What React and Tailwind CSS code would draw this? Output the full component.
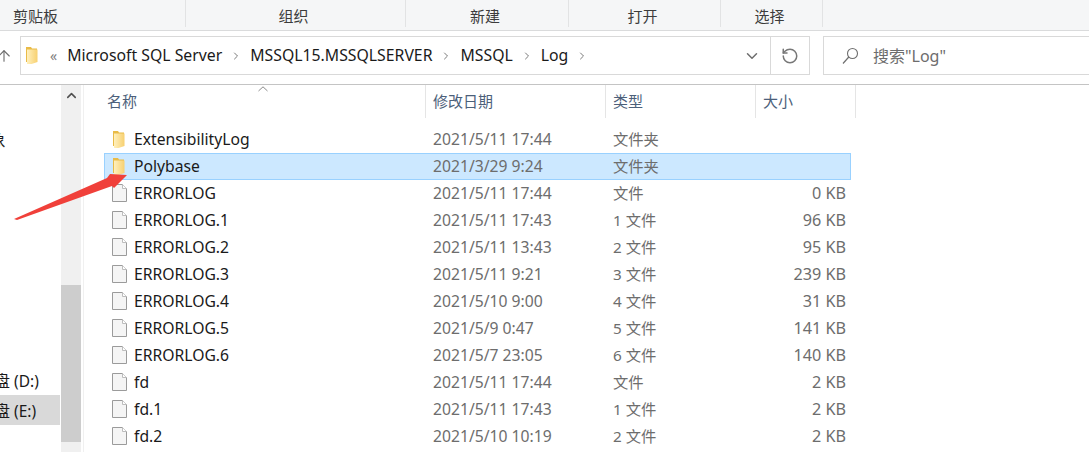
import React from 'react';
import { ChevronRight, ChevronDown, ChevronUp, RotateCcw, ArrowUp } from 'lucide-react';

const FONT = "font-['Noto_Sans','Noto_Sans_CJK_SC',sans-serif]";

const rows = [
  { name: 'ExtensibilityLog', date: '2021/5/11 17:44', type: '文件夹', size: '', folder: true },
  { name: 'Polybase', date: '2021/3/29 9:24', type: '文件夹', size: '', folder: true, selected: true },
  { name: 'ERRORLOG', date: '2021/5/11 17:44', type: '文件', size: '0 KB' },
  { name: 'ERRORLOG.1', date: '2021/5/11 17:43', type: '1 文件', size: '96 KB' },
  { name: 'ERRORLOG.2', date: '2021/5/11 13:43', type: '2 文件', size: '95 KB' },
  { name: 'ERRORLOG.3', date: '2021/5/11 9:21', type: '3 文件', size: '239 KB' },
  { name: 'ERRORLOG.4', date: '2021/5/10 9:00', type: '4 文件', size: '31 KB' },
  { name: 'ERRORLOG.5', date: '2021/5/9 0:47', type: '5 文件', size: '141 KB' },
  { name: 'ERRORLOG.6', date: '2021/5/7 23:05', type: '6 文件', size: '140 KB' },
  { name: 'fd', date: '2021/5/11 17:44', type: '文件', size: '2 KB' },
  { name: 'fd.1', date: '2021/5/11 17:43', type: '1 文件', size: '2 KB' },
  { name: 'fd.2', date: '2021/5/10 10:19', type: '2 文件', size: '2 KB' },
];

const ribbon = [
  { label: '剪贴板', width: 'w-[186px]', align: 'pl-[13px]' },
  { label: '组织', width: 'w-[220px]', align: 'justify-center pr-[4px]' },
  { label: '新建', width: 'w-[163px]', align: 'justify-center pr-[4px]' },
  { label: '打开', width: 'w-[152px]', align: 'justify-center pr-[4px]' },
  { label: '选择', width: 'w-[102px]', align: 'justify-center pr-[4px]' },
];

function FolderIcon() {
  return (
    <svg width="12" height="17" viewBox="0 0 12 17" className="shrink-0">
      <defs>
        <linearGradient id="folderFront" x1="0" x2="1" y1="0" y2="0">
          <stop offset="0" stopColor="#fff0bd" />
          <stop offset="1" stopColor="#f7d070" />
        </linearGradient>
      </defs>
      <path d="M0 0h5l1 1.5h5V15H0z" fill="#e9bb47" />
      <path d="M1 2.5h6.5l4 0V15l-6 2H1z" fill="url(#folderFront)" />
    </svg>
  );
}

function FileIcon() {
  return (
    <svg width="15" height="18" viewBox="0 0 15 18" className="shrink-0">
      <path d="M.5.5h10l4 4v13H.5z" fill="#f5f5f5" stroke="#9b9b9b" />
      <path d="M10.5.5v4h4" fill="#fff" stroke="#bdbdbd" />
    </svg>
  );
}

function SearchGlass() {
  return (
    <svg width="18" height="18" viewBox="0 0 18 18" fill="none" stroke="#6f6f6f" className="shrink-0">
      <circle cx="11.5" cy="6.5" r="5" strokeWidth="1.1" />
      <path d="M7.8 10 2 16.5" strokeWidth="1.2" />
    </svg>
  );
}

function Crumb({ children }) {
  return (
    <>
      <span className="pt-[1px] text-[15.8px] text-[#1a1a1a] whitespace-nowrap">{children}</span>
      <ChevronRight size={12} strokeWidth={2} className="mx-[8px] text-[#7a7a7a] shrink-0" />
    </>
  );
}

function HeaderCell({ label, width, pad }) {
  return (
    <div className={`${width} ${pad} h-[33px] pb-[1px] flex items-center border-r border-[#e5e5e5] text-[15px] text-[#4c607a]`}>
      {label}
    </div>
  );
}

function Row({ row }) {
  return (
    <div
      className={`grid grid-cols-[328px_180px_1fr_90px] h-[27px] items-center border pr-[4px] ${
        row.selected ? 'bg-[#cce8ff] border-[#99d1ff]' : 'border-transparent'
      }`}
    >
      <div className="flex items-center pl-[7px] text-[15.7px] text-[#1a1a1a]">
        {row.folder ? (
          <span className="ml-[1px] mr-[9px] flex"><FolderIcon /></span>
        ) : (
          <span className="mr-[7px] flex"><FileIcon /></span>
        )}
        <span>{row.name}</span>
      </div>
      <div className="text-[15.7px] text-[#6d6d6d]">{row.date}</div>
      <div className="text-[15.3px] text-[#6d6d6d]">{row.type}</div>
      <div className="text-[16.2px] text-[#6d6d6d] text-right">{row.size}</div>
    </div>
  );
}

export default function App() {
  return (
    <div className={`relative w-[1089px] h-[452px] overflow-hidden bg-white flex flex-col ${FONT}`}>
      {/* ribbon labels */}
      <div className="h-[31px] shrink-0 bg-[#f5f6f7] border-b border-[#dadbdc] flex items-start">
        {ribbon.map((g) => (
          <div
            key={g.label}
            className={`${g.width} h-[27px] pt-[6px] flex items-center ${g.align} border-r border-[#e2e3e4] text-[15px] text-[#3c3c3c]`}
          >
            {g.label}
          </div>
        ))}
      </div>

      {/* address bar */}
      <div className="h-[54px] shrink-0 border-b border-[#c4c4c4] flex items-start pt-[5px]">
        <div className="w-[20px] h-[39px] flex items-center -ml-[5px]">
          <ArrowUp size={18} strokeWidth={1.5} className="text-[#6e6e6e]" />
        </div>
        <div className="ml-[5px] w-[790px] h-[39px] border border-[#d9d9d9] flex items-center pl-[5px]">
          <FolderIcon />
          <span className="ml-[12px] mr-[10px] text-[14px] text-[#808080]">«</span>
          <Crumb>Microsoft SQL Server</Crumb>
          <Crumb>MSSQL15.MSSQLSERVER</Crumb>
          <Crumb>MSSQL</Crumb>
          <Crumb>Log</Crumb>
          <ChevronDown size={18} strokeWidth={2} className="ml-auto mr-[9px] text-[#6e6e6e]" />
          <div className="w-[39px] h-full border-l border-[#d9d9d9] flex items-center justify-center">
            <RotateCcw size={18} strokeWidth={2} className="text-[#777777]" />
          </div>
        </div>
        <div className="ml-[13px] flex-1 h-[39px] border border-[#d9d9d9] border-r-0 flex items-center pl-[17px] gap-[14px]">
          <SearchGlass />
          <span className="text-[16px] text-[#6d6d6d]">搜索"Log"</span>
        </div>
      </div>

      {/* body */}
      <div className="flex flex-1 min-h-0">
        {/* navigation pane, clipped at the left edge */}
        <div className="w-[61px] shrink-0 overflow-hidden text-[15.5px] text-[#1a1a1a] pt-[41px]">
          <div className="h-[30px] flex items-center -ml-[10px] whitespace-nowrap">象</div>
          <div className="h-[30px] mt-[209px] pt-[3px] flex items-center -ml-[52px] whitespace-nowrap">本地磁盘 (D:)</div>
          <div className="h-[30px] pt-[3px] flex items-center -ml-[52px] whitespace-nowrap bg-[#d9d9d9] w-[112px]">本地磁盘 (E:)</div>
        </div>

        {/* scrollbar */}
        <div className="w-[20px] shrink-0 bg-[#f0f0f0] flex flex-col">
          <div className="h-[200px] flex justify-center pt-[3px]">
            <ChevronUp size={15} strokeWidth={2.5} className="text-[#505050]" />
          </div>
          <div className="h-[157px] bg-[#cdcdcd]" />
        </div>

        {/* file list */}
        <div className="flex-1 ml-[2px] border-l border-[#f0f0f0] pl-[20px] min-w-0 relative">
          <div className="flex">
            <HeaderCell label="名称" width="w-[322px]" pad="pl-[3px]" />
            <HeaderCell label="修改日期" width="w-[180px]" pad="pl-[7px]" />
            <HeaderCell label="类型" width="w-[150px]" pad="pl-[7px]" />
            <HeaderCell label="大小" width="w-[100px]" pad="pl-[7px]" />
          </div>
          <svg width="10" height="6" viewBox="0 0 10 6" fill="none" stroke="#8a8a8a" className="absolute left-[174px] top-[1px]">
            <path d="M.5 5 5 .8 9.5 5" />
          </svg>
          <div className="w-[747px] pt-[8px]">
            {rows.map((r) => (
              <Row key={r.name} row={r} />
            ))}
          </div>
        </div>
      </div>

      {/* red annotation arrow */}
      <svg className="absolute left-0 top-0 pointer-events-none" width="1089" height="452">
        <polygon points="14,219 107,178 110,174 127,175 114,188 112,186 17,220" fill="#f0403a" />
      </svg>
    </div>
  );
}
